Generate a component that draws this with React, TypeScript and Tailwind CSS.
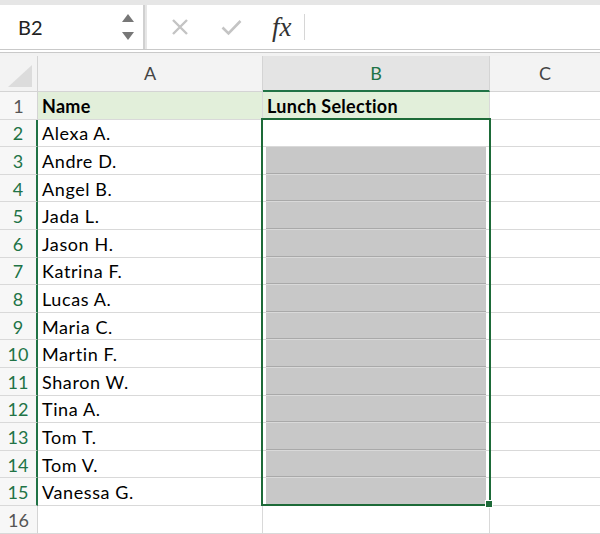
import React from "react";

const NAMES = [
  "Alexa A.",
  "Andre D.",
  "Angel B.",
  "Jada L.",
  "Jason H.",
  "Katrina F.",
  "Lucas A.",
  "Maria C.",
  "Martin F.",
  "Sharon W.",
  "Tina A.",
  "Tom T.",
  "Tom V.",
  "Vanessa G.",
];

const GREEN = "text-[#217346]";

function RowHeader({ n, selected }: { n: number; selected: boolean }) {
  return (
    <div
      className={`w-[38px] shrink-0 flex items-center justify-center pt-[2px] bg-[#f7f7f7] border-b border-[#d9d9d9] text-[18px] ${
        selected
          ? `${GREEN} border-r-2 border-r-[#217346]`
          : "text-[#555] border-r border-r-[#d4d4d4]"
      }`}
    >
      {n}
    </div>
  );
}

function Row({ n, name, shaded }: { n: number; name: string; shaded: boolean }) {
  return (
    <div className="flex h-[27.6px]">
      <RowHeader n={n} selected={n >= 2 && n <= 15} />
      <div className="w-[225px] shrink-0 flex items-center pl-[4px] pt-[2px] border-r border-b border-[#d9d9d9] text-[18px] tracking-[0.6px] text-black">
        {name}
      </div>
      <div className="w-[227px] shrink-0 border-r border-b border-[#d9d9d9]">
        {shaded && <div className="mx-[3px] h-full bg-[#c8c8c8] border-b border-[#a9a9a9]" />}
      </div>
      <div className="flex-1 border-b border-[#d9d9d9]" />
    </div>
  );
}

export default function App() {
  return (
    <div
      className="relative w-[600px] h-[534px] overflow-hidden bg-white"
      style={{ fontFamily: "Lato, 'Open Sans', sans-serif" }}
    >
      {/* Formula bar */}
      <div className="h-[5px] bg-[#e6e6e6]" />
      <div className="flex h-[44px] bg-white">
        <div className="w-[145px] flex items-center justify-between pl-[18px] pr-[8px] border-r-2 border-[#d0d0d0]">
          <span className="text-[20px] text-[#222]">B2</span>
          <svg width="14" height="28" viewBox="0 0 14 28">
            <path d="M7 1 L13 9 L1 9 Z" fill="#777" />
            <path d="M1 19 L13 19 L7 27 Z" fill="#777" />
          </svg>
        </div>
        <div className="w-[2px] bg-[#e6e6e6]" />
        <div className="flex-1 flex items-center">
          <svg className="ml-[24px]" width="18" height="18" viewBox="0 0 18 18">
            <path d="M2 2 L16 16 M16 2 L2 16" stroke="#c4c4c4" strokeWidth="2.4" />
          </svg>
          <svg className="ml-[32px]" width="21" height="17" viewBox="0 0 21 17">
            <path d="M1.5 8.5 L7.5 14.5 L19.5 2" stroke="#c4c4c4" strokeWidth="2.6" fill="none" />
          </svg>
          <span
            className="ml-[30px] text-[27px] italic text-[#333] leading-none"
            style={{ fontFamily: "'Liberation Serif', serif" }}
          >
            fx
          </span>
          <div className="ml-[12px] w-px h-[26px] bg-[#d6d6d6]" />
        </div>
      </div>
      <div className="h-[1px] bg-[#c9c9c9]" />
      <div className="h-[2px] bg-white" />
      <div className="h-[1px] bg-[#c9c9c9]" />
      <div className="h-[3px] bg-[#f2f2f2]" />

      {/* Column headers */}
      <div className="flex h-[36px]">
        <div className="w-[38px] shrink-0 flex items-end justify-end pr-[5px] pb-[4px] bg-[#f3f3f3] border-r border-b border-[#d4d4d4]">
          <svg width="24" height="22" viewBox="0 0 24 22">
            <path d="M24 0 L24 22 L0 22 Z" fill="#dcdcdc" />
          </svg>
        </div>
        <div className="w-[225px] shrink-0 flex items-center justify-center bg-[#f3f3f3] border-r border-b border-[#d4d4d4] text-[18px] text-[#444]">
          A
        </div>
        <div className={`w-[227px] shrink-0 flex items-center justify-center bg-[#e4e4e4] border-r border-[#d4d4d4] border-b-2 border-b-[#217346] text-[18px] ${GREEN}`}>
          B
        </div>
        <div className="flex-1 flex items-center justify-center bg-[#f3f3f3] border-b border-[#d4d4d4] text-[18px] text-[#444]">
          C
        </div>
      </div>

      {/* Row 1 */}
      <div className="flex h-[27.6px]">
        <RowHeader n={1} selected={false} />
        <div className="w-[225px] shrink-0 flex items-center pl-[4px] pt-[2px] bg-[#e2efda] border-r border-b border-[#d9d9d9] text-[18px] tracking-[0.3px] font-bold text-black">
          Name
        </div>
        <div className="w-[227px] shrink-0 flex items-center pl-[4px] pt-[2px] bg-[#e2efda] border-r border-b border-[#d9d9d9] text-[18px] tracking-[0.3px] font-bold text-black">
          Lunch Selection
        </div>
        <div className="flex-1 border-b border-[#d9d9d9]" />
      </div>

      {NAMES.map((name, i) => (
        <Row key={name} n={i + 2} name={name} shaded={i > 0} />
      ))}
      <Row n={16} name="" shaded={false} />

      {/* Selection outline + fill handle */}
      <div className="absolute left-[261px] top-[118px] w-[230px] h-[388px] border-2 border-[#1d6a38] pointer-events-none" />
      <div className="absolute left-[485px] top-[500px] w-[8px] h-[8px] bg-[#1d6a38] border border-white" />
    </div>
  );
}
